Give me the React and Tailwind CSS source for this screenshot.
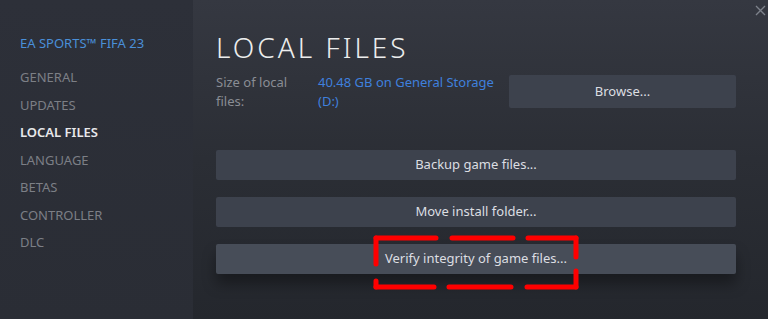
import React from 'react';

const navItems = ['GENERAL', 'UPDATES', 'LOCAL FILES', 'LANGUAGE', 'BETAS', 'CONTROLLER', 'DLC'];

const ActionButton = ({ label, className = '' }) => (
  <button
    className={`flex h-[30px] w-full items-center justify-center rounded-[2px] text-[13px] text-[#dcdee2] ${className}`}
  >
    {label}
  </button>
);

// red dashed highlight drawn around the verify button
const Highlight = () => (
  <svg
    className="pointer-events-none absolute left-[372px] top-[234px]"
    width="210"
    height="58"
    viewBox="0 0 210 58"
    fill="none"
    stroke="#ff0000"
    strokeWidth="5"
    strokeLinecap="round"
  >
    <path d="M4 4 H64 M80 4 H141 M156 4 H204" />
    <path d="M4 4 V30 M4 47 V53" />
    <path d="M204 4 V23 M204 37 V53" />
    <path d="M4 53 H62 M77 53 H139 M155 53 H204" />
  </svg>
);

export default function App() {
  return (
    <div className="relative flex h-[319px] w-[768px] overflow-hidden font-['Noto_Sans',sans-serif]">
      <aside className="flex w-[193px] shrink-0 flex-col bg-gradient-to-b from-[#2d3039] to-[#2a2d35] pl-5 pt-[33px]">
        <p className="text-[13px] leading-5 text-[#4a8fd8]">EA SPORTS™ FIFA 23</p>
        <nav className="mt-[11px] flex flex-col">
          {navItems.map((item) => (
            <span
              key={item}
              className={`text-[13px] leading-[27.5px] ${
                item === 'LOCAL FILES' ? 'font-semibold text-[#e8e9eb]' : 'text-[#7c7f86]'
              }`}
            >
              {item}
            </span>
          ))}
        </nav>
      </aside>

      <main className="flex flex-1 flex-col bg-gradient-to-b from-[#353841] via-[#2b2e35] to-[#24272d] pl-[23px] pr-8 pt-[29px]">
        <h1 className="text-[28px] font-light leading-9 tracking-[3px] text-[#eceded]">LOCAL FILES</h1>

        <div className="mt-[8px] flex items-start">
          <div className="w-[102px] shrink-0 text-[13px] leading-[19px] text-[#8a8d94]">
            Size of local
            <br />
            files:
          </div>
          <div className="w-[182px] shrink-0 text-[13px] leading-[19px] text-[#3f80dd]">
            40.48 GB on General Storage (D:)
          </div>
          <button className="ml-auto mt-[2px] flex h-[33px] w-[227px] items-center justify-center rounded-[2px] bg-[#3d424d] text-[13px] text-[#dcdee2]">
            Browse...
          </button>
        </div>

        <div className="mt-[39px] flex flex-col gap-[17px]">
          <ActionButton label="Backup game files..." className="bg-[#3d424d]" />
          <ActionButton label="Move install folder..." className="bg-[#3d424d]" />
          <ActionButton
            label="Verify integrity of game files..."
            className="bg-[#474d58] shadow-[0_10px_14px_rgba(0,0,0,0.35)]"
          />
        </div>
      </main>

      <svg
        className="absolute right-[2px] top-[5px]"
        width="11"
        height="11"
        viewBox="0 0 11 11"
        stroke="#7d828b"
        strokeWidth="1.3"
      >
        <path d="M1 1 L10 10 M10 1 L1 10" />
      </svg>

      <Highlight />
    </div>
  );
}
